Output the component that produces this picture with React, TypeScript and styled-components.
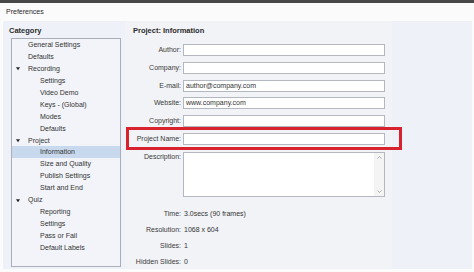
import React from "react";
import styled, {createGlobalStyle, css} from "styled-components";

const GlobalStyle = createGlobalStyle`
  html, body {
    margin: 0;
    padding: 0;
    background: #ffffff;
  }
  body {
    font-family: "Liberation Sans", Arial, sans-serif;
    font-size: 7px;
    color: #333333;
  }
`;

type TreeItem = { label: string; level: number; group?: boolean; selected?: boolean };

const tree: TreeItem[] = [
    {label: "General Settings", level: 0},
    {label: "Defaults", level: 0},
    {label: "Recording", level: 0, group: true},
    {label: "Settings", level: 1},
    {label: "Video Demo", level: 1},
    {label: "Keys - (Global)", level: 1},
    {label: "Modes", level: 1},
    {label: "Defaults", level: 1},
    {label: "Project", level: 0, group: true},
    {label: "Information", level: 1, selected: true},
    {label: "Size and Quality", level: 1},
    {label: "Publish Settings", level: 1},
    {label: "Start and End", level: 1},
    {label: "Quiz", level: 0, group: true},
    {label: "Reporting", level: 1},
    {label: "Settings", level: 1},
    {label: "Pass or Fail", level: 1},
    {label: "Default Labels", level: 1},
];

const fields = [
    {label: "Author:", value: ""},
    {label: "Company:", value: ""},
    {label: "E-mail:", value: "author@company.com"},
    {label: "Website:", value: "www.company.com"},
    {label: "Copyright:", value: ""},
    {label: "Project Name:", value: "", marked: true},
];

const info = [
    {label: "Time:", value: "3.0secs (90 frames)"},
    {label: "Resolution:", value: "1068 x 604"},
    {label: "Slides:", value: "1"},
    {label: "Hidden Slides:", value: "0"},
];

function App() {
    return (
        <Window>
            <GlobalStyle/>
            <TopStrip/>
            <TitleBar>Preferences</TitleBar>
            <Body>
                <Sidebar>
                    <Heading>Category</Heading>
                    <TreeBox>
                        {tree.map((t, i) => (
                            <TreeRow key={i} $level={t.level} $selected={t.selected}>
                                {t.group && (
                                    <Caret viewBox="0 0 5 4">
                                        <path d="M0 0 L5 0 L2.5 4 Z" fill="#222"/>
                                    </Caret>
                                )}
                                {t.label}
                            </TreeRow>
                        ))}
                    </TreeBox>
                </Sidebar>
                <Content>
                    <Heading>Project: Information</Heading>
                    <Form>
                        {fields.map(f => (
                            <FieldRow key={f.label} $marked={f.marked}>
                                <Label>{f.label}</Label>
                                <Input>{f.value}</Input>
                            </FieldRow>
                        ))}
                        <FieldRow $top>
                            <Label>Description:</Label>
                            <TextArea>
                                <Scroll>
                                    <svg width="5" height="3" viewBox="0 0 5 3">
                                        <path d="M0.5 2.5 L2.5 0.5 L4.5 2.5" stroke="#9a9a9a" fill="none" strokeWidth="0.8"/>
                                    </svg>
                                    <svg width="5" height="3" viewBox="0 0 5 3">
                                        <path d="M0.5 0.5 L2.5 2.5 L4.5 0.5" stroke="#9a9a9a" fill="none" strokeWidth="0.8"/>
                                    </svg>
                                </Scroll>
                            </TextArea>
                        </FieldRow>
                    </Form>
                    <Info>
                        {info.map(r => (
                            <InfoRow key={r.label}>
                                <Label>{r.label}</Label>
                                <Value>{r.value}</Value>
                            </InfoRow>
                        ))}
                    </Info>
                </Content>
            </Body>
        </Window>
    );
}

const Window = styled.div`
  width: 474px;
  height: 272px;
  background: #fbfbfb;
  overflow: hidden;
`;

const TopStrip = styled.div`
  height: 3px;
  background: #484848;
`;

const TitleBar = styled.div`
  height: 18px;
  line-height: 18px;
  padding-left: 6px;
  color: #2a2a2a;
`;

const Body = styled.div`
  display: flex;
  margin-left: 3px;
  width: 469px;
  height: 248px;
  background: #eef1f8;
`;

const Sidebar = styled.div`
  width: 122px;
  padding: 4px 0 0 6px;
  box-sizing: border-box;
`;

const Heading = styled.div`
  font-weight: bold;
  font-size: 7.5px;
  line-height: 12px;
  color: #2b2b2b;
`;

const TreeBox = styled.div`
  margin: 1px 0 0 2px;
  width: 110px;
  height: 229px;
  box-sizing: border-box;
  border: 1px solid #a9aeb9;
  background: #f2f4f9;
`;

const TreeRow = styled.div<{ $level: number; $selected?: boolean }>`
  position: relative;
  height: 11.94px;
  line-height: 11.94px;
  white-space: nowrap;
  padding-left: ${p => 16 + p.$level * 12}px;
  color: #333;
  ${p => p.$selected && css`
    background: #c8d9ee;
  `}
`;

const Caret = styled.svg`
  position: absolute;
  left: 4px;
  top: 4.5px;
  width: 4px;
  height: 3.5px;
`;

const Content = styled.div`
  width: 267px;
  padding: 4px 0 0 8px;
  box-sizing: border-box;
  background: #f2f3f7;
`;

const Form = styled.div`
  display: flex;
  flex-direction: column;
  gap: 5.8px;
  margin-top: 7px;
`;

const FieldRow = styled.div<{ $marked?: boolean; $top?: boolean }>`
  position: relative;
  display: flex;
  align-items: ${p => (p.$top ? "flex-start" : "center")};
  gap: 2px;
  ${p => p.$marked && css`
    &::after {
      content: "";
      position: absolute;
      left: -7px;
      right: -10px;
      top: -6px;
      bottom: -5px;
      border: 3px solid #d8222d;
      pointer-events: none;
    }
  `}
`;

const Label = styled.div`
  width: 48px;
  text-align: right;
  white-space: nowrap;
  line-height: 12px;
  color: #3a3a3a;
  flex-shrink: 0;
`;

const Input = styled.div`
  width: 202px;
  height: 12px;
  box-sizing: border-box;
  border: 1px solid #b3b7bf;
  background: #ffffff;
  padding-left: 2px;
  line-height: 10px;
  color: #333;
`;

const TextArea = styled.div`
  display: flex;
  justify-content: flex-end;
  width: 202px;
  height: 45px;
  margin-top: 1px;
  box-sizing: border-box;
  border: 1px solid #b3b7bf;
  background: #ffffff;
`;

const Scroll = styled.div`
  width: 10px;
  display: flex;
  flex-direction: column;
  justify-content: space-between;
  align-items: center;
  padding: 3px 0;
  background: #f4f4f4;
`;

const Info = styled.div`
  display: flex;
  flex-direction: column;
  gap: 4px;
  margin-top: 11px;
`;

const InfoRow = styled.div`
  display: flex;
  gap: 3px;
`;

const Value = styled.div`
  line-height: 12px;
  color: #333;
`;

export default App;
